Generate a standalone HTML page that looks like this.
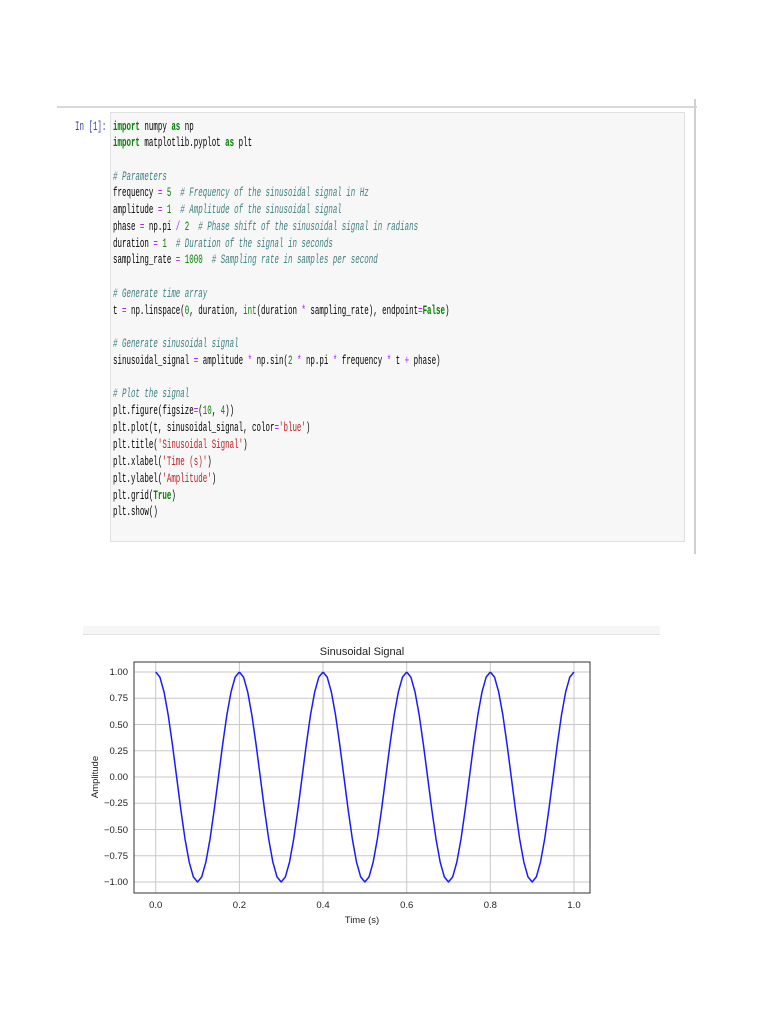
<!DOCTYPE html>
<html><head><meta charset="utf-8"><style>
body{margin:0;width:768px;height:1024px;background:#fff;position:relative;overflow:hidden;font-family:"Liberation Mono",monospace}
.hl{position:absolute;left:57px;top:106px;width:640px;height:2px;background:#d8d8d8}
.vl{position:absolute;left:694px;top:99px;width:2px;height:455px;background:#d0d0d0}
.box{position:absolute;left:110px;top:112px;width:573px;height:428px;background:#f7f7f7;border:1px solid #e0e0e0}
.ln{position:absolute;left:113px;font-size:13px;line-height:14px;white-space:pre;transform:scaleX(0.575);transform-origin:left center;color:#000}
.pr{position:absolute;left:75px;top:120px;font-size:13px;line-height:14px;white-space:pre;transform:scaleX(0.575);transform-origin:left center;color:#303f9f}
.k{color:#008000;font-weight:bold}.n{color:#008000}.o{color:#aa22ff}.c{color:#408080;font-style:italic}.s{color:#ba2121}
</style></head><body>
<div class="hl"></div><div class="vl"></div><div class="box"></div>
<div class="pr">In [1]:</div>
<div class="ln" style="top:120px"><span class="k">import</span> numpy <span class="k">as</span> np</div>
<div class="ln" style="top:136px"><span class="k">import</span> matplotlib.pyplot <span class="k">as</span> plt</div>
<div class="ln" style="top:170px"><span class="c"># Parameters</span></div>
<div class="ln" style="top:186px">frequency <span class="o">=</span> <span class="n">5</span>  <span class="c"># Frequency of the sinusoidal signal in Hz</span></div>
<div class="ln" style="top:203px">amplitude <span class="o">=</span> <span class="n">1</span>  <span class="c"># Amplitude of the sinusoidal signal</span></div>
<div class="ln" style="top:220px">phase <span class="o">=</span> np.pi <span class="o">/</span> <span class="n">2</span>  <span class="c"># Phase shift of the sinusoidal signal in radians</span></div>
<div class="ln" style="top:237px">duration <span class="o">=</span> <span class="n">1</span>  <span class="c"># Duration of the signal in seconds</span></div>
<div class="ln" style="top:253px">sampling_rate <span class="o">=</span> <span class="n">1000</span>  <span class="c"># Sampling rate in samples per second</span></div>
<div class="ln" style="top:287px"><span class="c"># Generate time array</span></div>
<div class="ln" style="top:304px">t <span class="o">=</span> np.linspace(<span class="n">0</span>, duration, <span class="n">int</span>(duration <span class="o">*</span> sampling_rate), endpoint<span class="o">=</span><span class="k">False</span>)</div>
<div class="ln" style="top:337px"><span class="c"># Generate sinusoidal signal</span></div>
<div class="ln" style="top:354px">sinusoidal_signal <span class="o">=</span> amplitude <span class="o">*</span> np.sin(<span class="n">2</span> <span class="o">*</span> np.pi <span class="o">*</span> frequency <span class="o">*</span> t <span class="o">+</span> phase)</div>
<div class="ln" style="top:387px"><span class="c"># Plot the signal</span></div>
<div class="ln" style="top:404px">plt.figure(figsize<span class="o">=</span>(<span class="n">10</span>, <span class="n">4</span>))</div>
<div class="ln" style="top:421px">plt.plot(t, sinusoidal_signal, color<span class="o">=</span><span class="s">'blue'</span>)</div>
<div class="ln" style="top:438px">plt.title(<span class="s">'Sinusoidal Signal'</span>)</div>
<div class="ln" style="top:455px">plt.xlabel(<span class="s">'Time (s)'</span>)</div>
<div class="ln" style="top:472px">plt.ylabel(<span class="s">'Amplitude'</span>)</div>
<div class="ln" style="top:489px">plt.grid(<span class="k">True</span>)</div>
<div class="ln" style="top:505px">plt.show()</div>

<svg style="position:absolute;left:0;top:0" width="768" height="1024" font-family="Liberation Sans, sans-serif">
<rect x="83" y="626" width="577" height="8" fill="#f6f6f6"/>
<line x1="83" y1="634.5" x2="660" y2="634.5" stroke="#e2e2e2"/>
<text x="362" y="655" font-size="11" text-anchor="middle" fill="#222">Sinusoidal Signal</text>
<g stroke="#c8c8c8" stroke-width="1">
<line x1="155.7" y1="662" x2="155.7" y2="893"/><line x1="239.4" y1="662" x2="239.4" y2="893"/><line x1="323" y1="662" x2="323" y2="893"/><line x1="406.7" y1="662" x2="406.7" y2="893"/><line x1="490.3" y1="662" x2="490.3" y2="893"/><line x1="574" y1="662" x2="574" y2="893"/>
<line x1="134" y1="672" x2="590" y2="672"/><line x1="134" y1="698.25" x2="590" y2="698.25"/><line x1="134" y1="724.5" x2="590" y2="724.5"/><line x1="134" y1="750.75" x2="590" y2="750.75"/><line x1="134" y1="777" x2="590" y2="777"/><line x1="134" y1="803.25" x2="590" y2="803.25"/><line x1="134" y1="829.5" x2="590" y2="829.5"/><line x1="134" y1="855.75" x2="590" y2="855.75"/><line x1="134" y1="882" x2="590" y2="882"/>
</g>
<rect x="134" y="662" width="456" height="231" fill="none" stroke="#333" stroke-width="1"/>
<defs><polyline id="p" fill="none" stroke="#1a1aff" stroke-width="1.5" stroke-linejoin="round" points="0,-105 4.18,-99.9 8.37,-84.9 12.55,-61.7 16.73,-32.4 20.92,0 25.1,32.4 29.28,61.7 33.46,84.9 37.65,99.9 41.83,105 46.01,99.9 50.2,84.9 54.38,61.7 58.56,32.4 62.75,0 66.93,-32.4 71.11,-61.7 75.3,-84.9 79.48,-99.9 83.66,-105"/></defs>
<g transform="translate(155.7,777)">
<use href="#p"/><use href="#p" x="83.66"/><use href="#p" x="167.32"/><use href="#p" x="250.98"/><use href="#p" x="334.64"/>
</g>
<g font-size="9.5" fill="#222" text-anchor="end">
<text x="128" y="675">1.00</text><text x="128" y="701">0.75</text><text x="128" y="728">0.50</text><text x="128" y="754">0.25</text><text x="128" y="780">0.00</text><text x="128" y="806">−0.25</text><text x="128" y="833">−0.50</text><text x="128" y="859">−0.75</text><text x="128" y="885">−1.00</text>
</g>
<g font-size="9.5" fill="#222" text-anchor="middle">
<text x="155.7" y="908">0.0</text><text x="239.4" y="908">0.2</text><text x="323" y="908">0.4</text><text x="406.7" y="908">0.6</text><text x="490.3" y="908">0.8</text><text x="574" y="908">1.0</text>
<text x="362" y="923">Time (s)</text>
</g>
<text x="0" y="0" font-size="9.5" fill="#222" text-anchor="middle" transform="translate(98,777) rotate(-90)">Amplitude</text>
</svg>
</body></html>
